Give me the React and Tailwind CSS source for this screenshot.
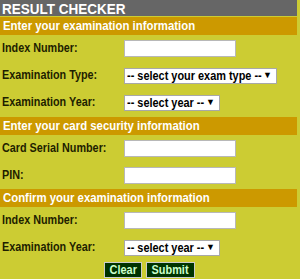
import React from "react";

const font = { fontFamily: '"Liberation Sans", Arial, sans-serif' };

function T({ children, className = "scale-x-[0.84]" }) {
  return (
    <span className={"inline-block whitespace-nowrap origin-left " + className}>
      {children}
    </span>
  );
}

function Header({ children, className = "" }) {
  return (
    <div className={"h-[18px] bg-[#cc9900] text-white font-bold text-[13px] leading-[18px] pl-[3px] mr-[3px] overflow-hidden " + className}>
      <T className="scale-x-[0.875]">{children}</T>
    </div>
  );
}

function Row({ label, children }) {
  return (
    <div className="flex items-center h-[27px]">
      <div className="w-[124px] shrink-0 pl-[2px] font-bold text-[13.5px] text-[#1e1e00]">
        <T className="scale-x-[0.8]">{label}</T>
      </div>
      {children}
    </div>
  );
}

function Input({ w = "w-[112px]" }) {
  return <div className={"h-[17px] bg-white border border-[#b8b8b8] " + w} />;
}

function Select({ text, w }) {
  return (
    <div className={"h-[16px] bg-white border border-[#a8a8a8] flex items-center pl-[2px] pr-[4px] text-[13px] font-bold text-black " + w}>
      <div className="flex-1 min-w-0 leading-none">
        <T className="scale-x-[0.84] leading-none">{text}</T>
      </div>
      <span className="shrink-0 text-[9px] leading-none">▼</span>
    </div>
  );
}

function Btn({ children, w }) {
  return (
    <div className={"h-[16px] bg-[#003300] border border-[#cccccc] text-[#ccffcc] font-bold text-[13px] leading-[14px] flex justify-center overflow-hidden " + w}>
      <span className="inline-block whitespace-nowrap scale-x-[0.84] origin-center">{children}</span>
    </div>
  );
}

export default function App() {
  return (
    <div className="w-[300px] h-[279px] bg-[#cccc33] overflow-hidden" style={font}>
      <div className="h-[16px] bg-[#666666] mr-[3px] text-white font-bold text-[15px] leading-[17px] pl-[2px] overflow-hidden">
        <T className="scale-x-[0.9]">RESULT CHECKER</T>
      </div>
      <div className="h-[1px]" />
      <Header>Enter your examination information</Header>
      <Row label="Index Number:"><Input /></Row>
      <Row label="Examination Type:"><Select text="-- select your exam type --" w="w-[153px]" /></Row>
      <Row label="Examination Year:"><Select text="-- select year --" w="w-[96px]" /></Row>
      <Header className="mt-[1px]">Enter your card security information</Header>
      <Row label="Card Serial Number:"><Input /></Row>
      <Row label="PIN:"><Input /></Row>
      <Header>Confirm your examination information</Header>
      <Row label="Index Number:"><Input /></Row>
      <Row label="Examination Year:"><Select text="-- select year --" w="w-[96px]" /></Row>
      <div className="flex gap-[4px] pl-[104px] mt-[1px]">
        <Btn w="w-[38px]">Clear</Btn>
        <Btn w="w-[49px]">Submit</Btn>
      </div>
    </div>
  );
}
